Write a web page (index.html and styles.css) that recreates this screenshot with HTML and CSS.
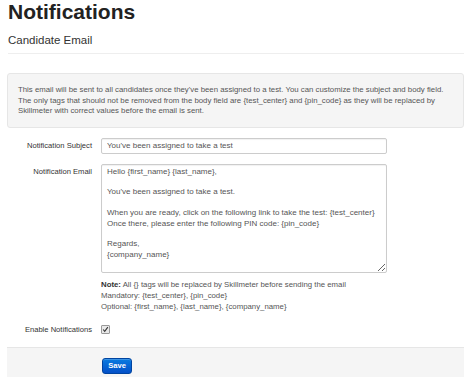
FILE: index.html
```html
<!DOCTYPE html>
<html lang="en">
<head>
    <meta charset="UTF-8">
    <title>Notifications</title>
    <link rel="stylesheet" href="styles.css">
</head>
<body>
    <div class="page">
        <h1 class="page-title">Notifications</h1>
        <h2 class="section-title">Candidate Email</h2>

        <div class="info-well">
            This email will be sent to all candidates once they've been assigned to a test. You can customize the subject and body field.<br>
            The only tags that should not be removed from the body field are {test_center} and {pin_code} as they will be replaced by<br>
            Skillmeter with correct values before the email is sent.
        </div>

        <form class="notif-form">
            <div class="form-row">
                <label class="form-label" for="subject">Notification Subject</label>
                <div class="form-controls">
                    <input id="subject" class="text-input" type="text" value="You've been assigned to take a test">
                </div>
            </div>

            <div class="form-row">
                <label class="form-label" for="body">Notification Email</label>
                <div class="form-controls">
                    <textarea id="body" class="text-area">Hello {first_name} {last_name},

You've been assigned to take a test.

When you are ready, click on the following link to take the test: {test_center}
Once there, please enter the following PIN code: {pin_code}

Regards,
{company_name}</textarea>
                    <p class="help-text">
                        <strong>Note:</strong> All {} tags will be replaced by Skillmeter before sending the email<br>
                        Mandatory: {test_center}, {pin_code}<br>
                        Optional: {first_name}, {last_name}, {company_name}
                    </p>
                </div>
            </div>

            <div class="form-row form-row-check">
                <label class="form-label" for="enabled">Enable Notifications</label>
                <div class="form-controls">
                    <input id="enabled" class="check" type="checkbox" checked>
                </div>
            </div>

            <div class="form-actions">
                <button type="button" class="btn-save">Save</button>
            </div>
        </form>
    </div>
</body>
</html>
```

FILE: styles.css
```css
* {
    margin: 0;
    padding: 0;
    box-sizing: border-box;
}

body {
    font-family: 'Liberation Sans', Arial, sans-serif;
    color: #333;
    background: #fff;
    overflow: hidden;
}

.page {
    padding: 0 10px 0 7px;
}

.page-title {
    font-size: 21px;
    font-weight: 700;
    line-height: 24px;
    color: #222;
    padding-left: 1px;
}

.section-title {
    font-size: 11.5px;
    font-weight: 400;
    line-height: 14px;
    color: #333;
    margin: 9px 0 0 1px;
    padding-bottom: 6px;
    border-bottom: 1px solid #eee;
}

.info-well {
    margin-top: 19px;
    background: #f5f5f5;
    border: 1px solid #e6e6e6;
    border-radius: 3px;
    padding: 11px 10px 10px 10px;
    font-size: 7.8px;
    line-height: 10.5px;
    color: #555;
}

.notif-form {
    margin-top: 10px;
}

.form-row {
    display: grid;
    grid-template-columns: 85px 286px;
    column-gap: 9px;
    margin-bottom: 10px;
}

.form-label {
    text-align: right;
    font-size: 7.6px;
    line-height: 15px;
    color: #333;
}

.text-input,
.text-area {
    display: block;
    width: 100%;
    font-family: inherit;
    font-size: 8px;
    color: #555;
    background: #fff;
    border: 1px solid #ccc;
    border-radius: 2px;
    box-shadow: inset 0 1px 1px rgba(0,0,0,0.06);
}

.text-input {
    height: 16px;
    padding: 0 5px;
}

.text-area {
    height: 109px;
    padding: 2px 5px;
    line-height: 10.4px;
    resize: vertical;
}

.help-text {
    margin-top: 6px;
    font-size: 7.8px;
    line-height: 11px;
    color: #555;
}

.help-text strong {
    color: #333;
}

.form-row-check {
    margin-top: 8px;
    margin-bottom: 10px;
}

.check {
    appearance: none;
    -webkit-appearance: none;
    display: block;
    width: 9px;
    height: 9px;
    margin-top: 3px;
    border: 1px solid #999;
    border-radius: 1px;
    background-color: #e8e8e8;
    background-image: url("data:image/svg+xml,%3Csvg xmlns='http://www.w3.org/2000/svg' viewBox='0 0 9 9'%3E%3Cpath d='M1.5 4.5 L3.5 6.8 L7.5 1.5' fill='none' stroke='%23333' stroke-width='1.4'/%3E%3C/svg%3E");
    background-size: 100% 100%;
}

.form-actions {
    background: #f5f5f5;
    border-top: 1px solid #e6e6e6;
    padding: 10px 0 4px 95px;
    height: 32px;
}

.btn-save {
    display: block;
    font-family: inherit;
    font-size: 7.6px;
    font-weight: 700;
    color: #fff;
    width: 30px;
    height: 16px;
    border: 1px solid #0044a0;
    border-radius: 3px;
    background: linear-gradient(#0a7be0, #0450c8);
    box-shadow: inset 0 1px 0 rgba(255,255,255,0.2);
}
```
